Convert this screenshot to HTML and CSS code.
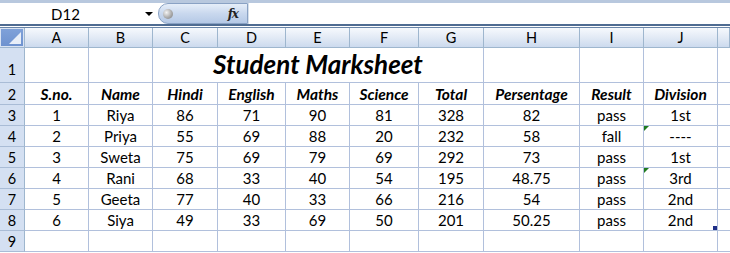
FILE: index.html
```html
<!DOCTYPE html>
<html>
<head>
<meta charset="utf-8">
<link rel="stylesheet" href="styles.css">
</head>
<body>
<div class="app">
  <div class="fbar">
    <div class="namebox">
      <span class="nb-text">D12</span>
      <span class="nb-arrow"></span>
    </div>
    <div class="pill">
      <span class="knob"></span>
      <span class="fx">fx</span>
    </div>
    <div class="finput"></div>
  </div>
  <div class="sep"></div>
  <div class="sheet">
    <div class="corner"><span class="tri"></span></div>
    <div class="ch">A</div><div class="ch">B</div><div class="ch">C</div><div class="ch">D</div><div class="ch">E</div><div class="ch">F</div><div class="ch">G</div><div class="ch">H</div><div class="ch">I</div><div class="ch">J</div><div class="ch last"></div>

    <div class="rh r1">1</div><div class="c r1"></div><div class="c r1"></div><div class="c r1 title">Student Marksheet</div><div class="c r1"></div><div class="c r1"></div><div class="c r1"></div><div class="c r1 last"></div>

    <div class="rh r2">2</div><div class="c r2 b">S.no.</div><div class="c r2 b">Name</div><div class="c r2 b">Hindi</div><div class="c r2 b">English</div><div class="c r2 b">Maths</div><div class="c r2 b">Science</div><div class="c r2 b">Total</div><div class="c r2 b">Persentage</div><div class="c r2 b">Result</div><div class="c r2 b">Division</div><div class="c r2 last"></div>

    <div class="rh">3</div><div class="c">1</div><div class="c">Riya</div><div class="c">86</div><div class="c">71</div><div class="c">90</div><div class="c">81</div><div class="c">328</div><div class="c">82</div><div class="c">pass</div><div class="c">1st</div><div class="c last"></div>

    <div class="rh">4</div><div class="c">2</div><div class="c">Priya</div><div class="c">55</div><div class="c">69</div><div class="c">88</div><div class="c">20</div><div class="c">232</div><div class="c">58</div><div class="c">fall</div><div class="c err">----</div><div class="c last"></div>

    <div class="rh">5</div><div class="c">3</div><div class="c">Sweta</div><div class="c">75</div><div class="c">69</div><div class="c">79</div><div class="c">69</div><div class="c">292</div><div class="c">73</div><div class="c">pass</div><div class="c">1st</div><div class="c last"></div>

    <div class="rh">6</div><div class="c">4</div><div class="c">Rani</div><div class="c">68</div><div class="c">33</div><div class="c">40</div><div class="c">54</div><div class="c">195</div><div class="c">48.75</div><div class="c">pass</div><div class="c err">3rd</div><div class="c last"></div>

    <div class="rh">7</div><div class="c">5</div><div class="c">Geeta</div><div class="c">77</div><div class="c">40</div><div class="c">33</div><div class="c">66</div><div class="c">216</div><div class="c">54</div><div class="c">pass</div><div class="c">2nd</div><div class="c last"></div>

    <div class="rh">8</div><div class="c">6</div><div class="c">Siya</div><div class="c">49</div><div class="c">33</div><div class="c">69</div><div class="c">50</div><div class="c">201</div><div class="c">50.25</div><div class="c">pass</div><div class="c mark">2nd</div><div class="c last"></div>

    <div class="rh">9</div><div class="c"></div><div class="c"></div><div class="c"></div><div class="c"></div><div class="c"></div><div class="c"></div><div class="c"></div><div class="c"></div><div class="c"></div><div class="c"></div><div class="c last"></div>
  </div>
</div>
</body>
</html>
```

FILE: styles.css
```css
html, body {
  margin: 0;
  padding: 0;
  background: #ffffff;
}
body {
  width: 730px;
  height: 253px;
  overflow: hidden;
  font-family: Lato, "Liberation Sans", sans-serif;
  color: #000;
}
.app {
  width: 730px;
}
.fbar {
  display: flex;
  height: 24px;
  box-sizing: border-box;
  border-top: 3px solid #b8c8de;
  background: #fff;
}
.namebox {
  width: 158px;
  display: flex;
  align-items: center;
}
.nb-text {
  flex: 1;
  text-align: center;
  font-size: 15px;
  padding-right: 14px;
}
.nb-arrow {
  width: 0;
  height: 0;
  border-left: 4px solid transparent;
  border-right: 4px solid transparent;
  border-top: 4px solid #000;
  margin-right: 5px;
  margin-top: 1px;
}
.pill {
  width: 90px;
  height: 21px;
  box-sizing: border-box;
  border: 1px solid #8aa2c4;
  border-radius: 10px 0 0 10px;
  background: linear-gradient(#e6eef9, #c9d8ee 50%, #b5c9e6);
  display: flex;
  align-items: center;
  justify-content: space-between;
  padding: 0 9px 0 4px;
}
.knob {
  width: 10px;
  height: 10px;
  border-radius: 50%;
  background: radial-gradient(circle at 35% 35%, #f4f4f4, #a5a5a5 60%, #7c7c7c);
}
.fx {
  font-family: "DejaVu Serif", "Liberation Serif", serif;
  font-style: italic;
  font-weight: bold;
  font-size: 12px;
  color: #222;
  letter-spacing: -1px;
}
.finput {
  flex: 1;
  border-left: 1px solid #d6dfea;
}
.sep {
  height: 4px;
  box-sizing: border-box;
  border-top: 2px solid #4f6c92;
  border-bottom: 1px solid #6985a8;
  background: #fff;
}
.sheet {
  display: grid;
  grid-template-columns: 25px 64px 64px 65px 68px 64px 69px 65px 96px 64px 74px 1fr;
  grid-template-rows: 20px 35px 22px 21px 21px 21px 21px 21px 21px 21px;
}
.corner {
  background: #d9e3f2;
  border-right: 1px solid #9eb6ce;
  border-bottom: 1px solid #9eb6ce;
  box-sizing: border-box;
  padding: 1px;
  position: relative;
}
.corner::before {
  content: "";
  display: block;
  width: 100%;
  height: 100%;
  background: linear-gradient(#7fa1d9, #6e92cf);
}
.tri {
  position: absolute;
  right: 3px;
  bottom: 3px;
  width: 0;
  height: 0;
  border-left: 12px solid transparent;
  border-bottom: 12px solid #e8eef8;
}
.ch {
  background: linear-gradient(#f6f9fd, #e2eaf5 50%, #ccdaee);
  border-right: 1px solid #9eb6ce;
  border-bottom: 1px solid #9eb6ce;
  box-sizing: border-box;
  font-size: 14.5px;
  text-align: center;
  line-height: 19px;
  color: #000;
}
.rh {
  background: #d4e0f2;
  border-right: 1px solid #9eb6ce;
  border-bottom: 1px solid #a9bcd6;
  box-sizing: border-box;
  font-size: 14.5px;
  display: flex;
  align-items: flex-end;
  justify-content: center;
  padding-bottom: 1px;
}
.rh.r1 {
  padding-bottom: 4px;
}
.c {
  border-right: 1px solid #b1c0dc;
  border-bottom: 1px solid #b1c0dc;
  box-sizing: border-box;
  font-size: 15px;
  display: flex;
  align-items: flex-end;
  justify-content: center;
  padding-bottom: 1px;
  white-space: nowrap;
  position: relative;
}
.c.last {
  border-right: none;
}
.b {
  font-weight: bold;
  font-style: italic;
  font-size: 15.5px;
}
.title {
  grid-column: span 5;
  font-size: 26px;
  font-weight: bold;
  font-style: italic;
  padding-bottom: 2px;
}
.err::before {
  content: "";
  position: absolute;
  left: 0;
  top: 0;
  width: 0;
  height: 0;
  border-top: 5px solid #1e7a1e;
  border-right: 5px solid transparent;
}
.mark::after {
  content: "";
  position: absolute;
  right: 0;
  bottom: 0;
  width: 4px;
  height: 4px;
  background: #1f2f88;
}
```
